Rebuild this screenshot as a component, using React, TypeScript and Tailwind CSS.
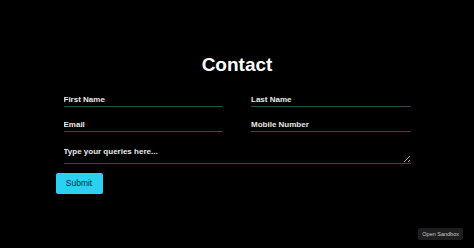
import React from "react";

export default function App() {
  return (
    <div
      className="relative min-h-screen h-[248px] bg-black text-white"
      style={{ fontFamily: '"Liberation Sans", Arial, sans-serif' }}
    >
      <div className="w-[363px] mx-auto pt-[53px] px-2">
        <h1 className="text-center text-[19px] leading-[24px] font-bold">Contact</h1>

        <form className="mt-[16px]" onSubmit={(e) => e.preventDefault()}>
          <div className="grid grid-cols-2 gap-x-[28px] gap-y-[11px]">
            <input
              type="text"
              placeholder="First Name"
              className="h-[14px] w-full bg-transparent border-b border-[#2c4b57] text-[8px] font-bold outline-none placeholder:text-[#e8e8e8]"
            />
            <input
              type="text"
              placeholder="Last Name"
              className="h-[14px] w-full bg-transparent border-b border-[#2c4b57] text-[8px] font-bold outline-none placeholder:text-[#e8e8e8]"
            />
            <input
              type="email"
              placeholder="Email"
              className="h-[14px] w-full bg-transparent border-b border-[#2c4b57] text-[8px] font-bold outline-none placeholder:text-[#e8e8e8]"
            />
            <input
              type="tel"
              placeholder="Mobile Number"
              className="h-[14px] w-full bg-transparent border-b border-[#2c4b57] text-[8px] font-bold outline-none placeholder:text-[#e8e8e8]"
            />
          </div>

          <textarea
            placeholder="Type your queries here..."
            className="mt-[12px] block h-[20px] w-full bg-transparent border-b border-[#2c4b57] pt-[2px] text-[8px] leading-[12px] font-bold outline-none placeholder:text-[#e8e8e8]"
          />

          <button
            type="submit"
            className="-ml-2 mt-[9px] h-[21px] w-[47px] rounded-[2px] bg-[#2bd0f2] text-[8.5px] text-[#0b2a35]"
          >
            Submit
          </button>
        </form>
      </div>

      <button className="absolute right-[11px] bottom-[8px] h-[12px] px-[4px] rounded-[2px] bg-[#1e1e1e] text-[5.5px] text-[#c8c8c8]">
        Open Sandbox
      </button>
    </div>
  );
}
